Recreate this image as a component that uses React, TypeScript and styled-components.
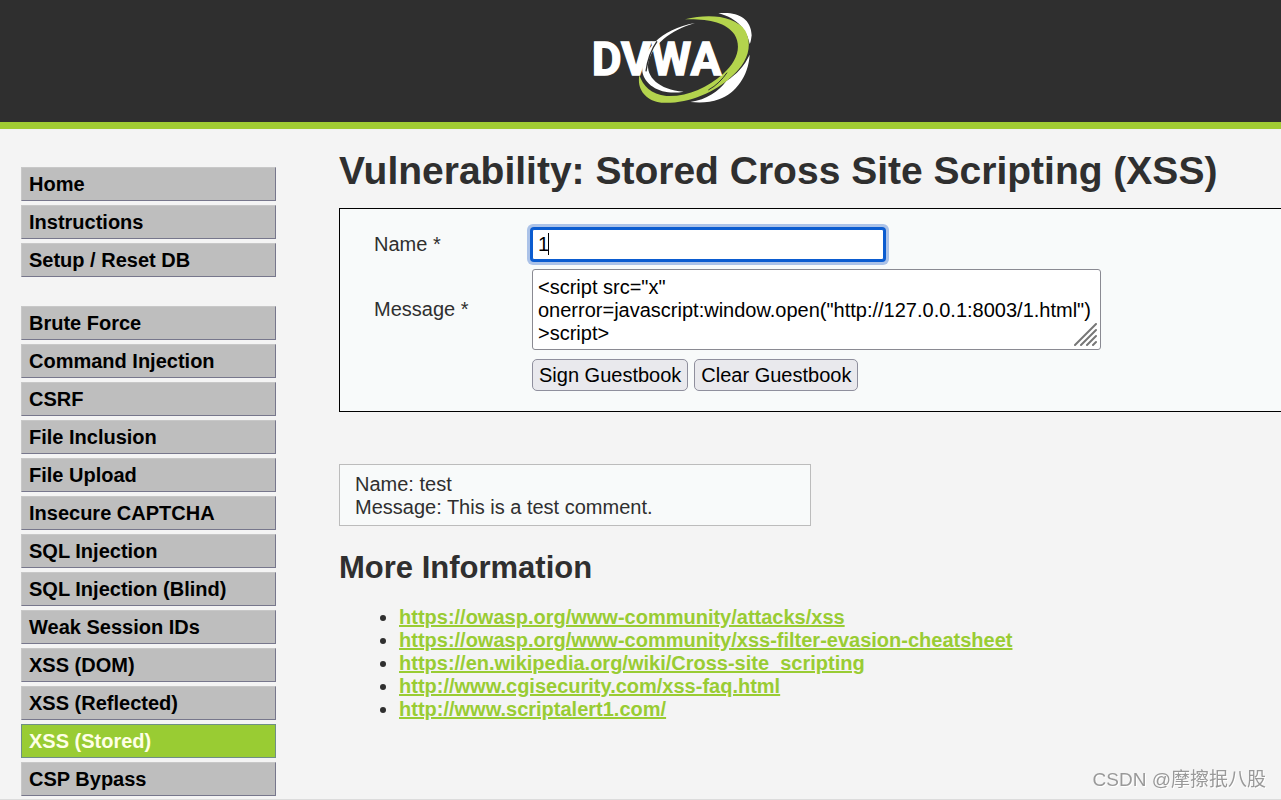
import React, { useState } from "react";
import styled, { createGlobalStyle } from "styled-components";

const GlobalStyle = createGlobalStyle`
  *, *::before, *::after { box-sizing: border-box; }
  body {
    margin: 0;
    background: #f4f4f4;
    color: #2f2f2f;
    font: 20px/23px "Liberation Sans", Arial, sans-serif;
    overflow-x: hidden;
  }
`;

const Viewport = styled.div`
  min-height: 100vh;
  overflow: hidden;
  border-bottom: 1px solid #dcdcdc;
`;

const Page = styled.div`
  width: 105%;
`;

const Header = styled.header`
  display: flex;
  justify-content: center;
  padding: 12px 0 18px;
  background: #2f2f2f;
  border-bottom: 7px solid #a1cc33;
`;

const Columns = styled.div`
  display: flex;
  align-items: flex-start;
  gap: 63px;
  padding: 0 21px;
`;

const Sidebar = styled.nav`
  flex: 0 0 255px;
  display: flex;
  flex-direction: column;
  gap: 29px;
  padding-top: 38px;
`;

const MenuGroup = styled.ul`
  display: flex;
  flex-direction: column;
  gap: 4px;
  margin: 0;
  padding: 0;
  list-style: none;
`;

const MenuLink = styled.a<{ $active?: boolean }>`
  display: block;
  height: 34px;
  padding: 5px 7px;
  border: 1px solid;
  border-color: ${(p) => (p.$active ? "#6f8f86" : "#c8c8c8 #77778c #77778c #c8c8c8")};
  background: ${(p) => (p.$active ? "#99cc33" : "#bebebe")};
  color: ${(p) => (p.$active ? "#ffffe6" : "#000")};
  font-weight: bold;
  text-decoration: none;
`;

const Main = styled.main`
  flex: 1;
  min-width: 0;
`;

const Title = styled.h1`
  margin: 0;
  padding: 19px 0 14px;
  font-size: 39px;
  line-height: 46px;
`;

const FormPanel = styled.form`
  display: grid;
  grid-template-columns: 158px 1fr;
  align-items: center;
  justify-items: start;
  row-gap: 9px;
  padding: 20px 34px;
  border: 1px solid #000;
  background: #f8fafa;
`;

const InputWrap = styled.div`
  position: relative;
  display: flex;
`;

const TextInput = styled.input`
  width: 352px;
  height: 31px;
  padding: 0 5px;
  border: 1px solid #0b5cd0;
  border-radius: 2px;
  outline: none;
  box-shadow: 0 0 0 2px #0b5cd0, 0 0 0 5px #abc2e8;
  background: #fff;
  color: #000;
  caret-color: transparent;
  font: inherit;
`;

const Caret = styled.span`
  position: absolute;
  left: 16px;
  top: 4px;
  width: 1px;
  height: 22px;
  background: #000;
`;

const TextArea = styled.textarea`
  display: block;
  width: 569px;
  height: 81px;
  padding: 6px 5px 4px;
  border: 1px solid #8a8a92;
  border-radius: 3px;
  resize: none;
  overflow: hidden;
  background: #fff;
  color: #000;
  font: inherit;
`;

const Grip = styled.svg`
  position: absolute;
  right: 4px;
  bottom: 4px;
`;

const Buttons = styled.div`
  grid-column: 2;
  display: flex;
  gap: 6px;
`;

const Button = styled.button`
  height: 32px;
  padding: 0 6px;
  border: 1px solid #8f8f9d;
  border-radius: 5px;
  background: #e9e9ed;
  color: #000;
  font: inherit;
  white-space: nowrap;
`;

const Comment = styled.div`
  width: 472px;
  margin-top: 52px;
  padding: 8px 15px 6px;
  border: 1px solid #bcbcbc;
  background: #f8fafa;
`;

const Subtitle = styled.h2`
  margin: 24px 0 20px;
  font-size: 31px;
  line-height: 36px;
`;

const Links = styled.ul`
  margin: 0;
  padding-left: 60px;
`;

const ExternalLink = styled.a`
  color: #99cc33;
  font-weight: bold;
`;

const Watermark = styled.div`
  position: fixed;
  right: 15px;
  bottom: 8px;
  color: #999;
  font: 19px/24px "Liberation Sans", "Noto Sans CJK SC", sans-serif;
  text-shadow: 1px 1px 0 #fff;
`;

function Logo() {
  return (
    <svg width="160" height="92" viewBox="40 36 480 276" role="img" aria-label="DVWA">
      <path d="M416 40 C470 34 514 52 516 106 C514 118 514 125 510 132 C502 92 476 55 416 40Z" fill="#fff" />
      <path d="M510 164 C506 228 470 278 418 298 C392 308 360 309 332 306 C382 298 415 276 440 243 C472 222 494 198 510 164Z" fill="#fff" />
      <path d="M346 69 C272 90 218 135 206 187 C198 230 237 270 312 275 C250 287 196 259 188 215 C184 153 243 87 346 69Z" fill="#fff" />
      <path d="M316 58 C390 40 466 48 497 92 C522 140 500 192 455 230 C405 279 318 313 245 308 C200 303 171 270 179 226 C190 257 214 284 260 288 C323 291 382 264 430 222 C470 185 488 142 464 103 C439 66 382 56 316 58Z" fill="#b4d44d" />
      <path d="M442 218 C428 238 410 257 386 270" fill="none" stroke="#2f2f2f" strokeWidth="3" />
      <text x="36" y="225" fill="#fff" stroke="#fff" strokeWidth="4" fontFamily="Roboto, sans-serif" fontSize="138" fontWeight="700">DVWA</text>
      <path d="M232 124 C215 148 204 177 199 214" fill="none" stroke="#2f2f2f" strokeWidth="4" />
    </svg>
  );
}

const menu = [
  ["Home", "Instructions", "Setup / Reset DB"],
  [
    "Brute Force",
    "Command Injection",
    "CSRF",
    "File Inclusion",
    "File Upload",
    "Insecure CAPTCHA",
    "SQL Injection",
    "SQL Injection (Blind)",
    "Weak Session IDs",
    "XSS (DOM)",
    "XSS (Reflected)",
    "XSS (Stored)",
    "CSP Bypass",
  ],
];

const links = [
  "https://owasp.org/www-community/attacks/xss",
  "https://owasp.org/www-community/xss-filter-evasion-cheatsheet",
  "https://en.wikipedia.org/wiki/Cross-site_scripting",
  "http://www.cgisecurity.com/xss-faq.html",
  "http://www.scriptalert1.com/",
];

const initialMessage =
  '<script src="x"\nonerror=javascript:window.open("http://127.0.0.1:8003/1.html")\n>script>';

export default function App() {
  const [name, setName] = useState("1");
  const [message, setMessage] = useState(initialMessage);

  return (
    <Viewport>
      <GlobalStyle />
      <Page>
        <Header>
          <Logo />
        </Header>
        <Columns>
          <Sidebar>
            {menu.map((group) => (
              <MenuGroup key={group[0]}>
                {group.map((label) => (
                  <li key={label}>
                    <MenuLink href="#" $active={label === "XSS (Stored)"}>
                      {label}
                    </MenuLink>
                  </li>
                ))}
              </MenuGroup>
            ))}
          </Sidebar>
          <Main>
            <Title>Vulnerability: Stored Cross Site Scripting (XSS)</Title>
            <FormPanel onSubmit={(e) => e.preventDefault()}>
              <label htmlFor="name">Name *</label>
              <InputWrap>
                <TextInput id="name" value={name} onChange={(e) => setName(e.target.value)} />
                <Caret />
              </InputWrap>
              <label htmlFor="message">Message *</label>
              <InputWrap>
                <TextArea id="message" value={message} onChange={(e) => setMessage(e.target.value)} />
                <Grip width="23" height="23" viewBox="0 0 23 23" stroke="#777" strokeWidth="2" strokeLinecap="round" aria-hidden="true">
                  <path d="M1 22 22 1M7 22 22 7M13 22 22 13M19 22 22 19" />
                </Grip>
              </InputWrap>
              <Buttons>
                <Button type="submit">Sign Guestbook</Button>
                <Button type="button">Clear Guestbook</Button>
              </Buttons>
            </FormPanel>
            <Comment>
              Name: test
              <br />
              Message: This is a test comment.
            </Comment>
            <Subtitle>More Information</Subtitle>
            <Links>
              {links.map((url) => (
                <li key={url}>
                  <ExternalLink href={url}>{url}</ExternalLink>
                </li>
              ))}
            </Links>
          </Main>
        </Columns>
      </Page>
      <Watermark>CSDN @摩擦抿八股</Watermark>
    </Viewport>
  );
}
